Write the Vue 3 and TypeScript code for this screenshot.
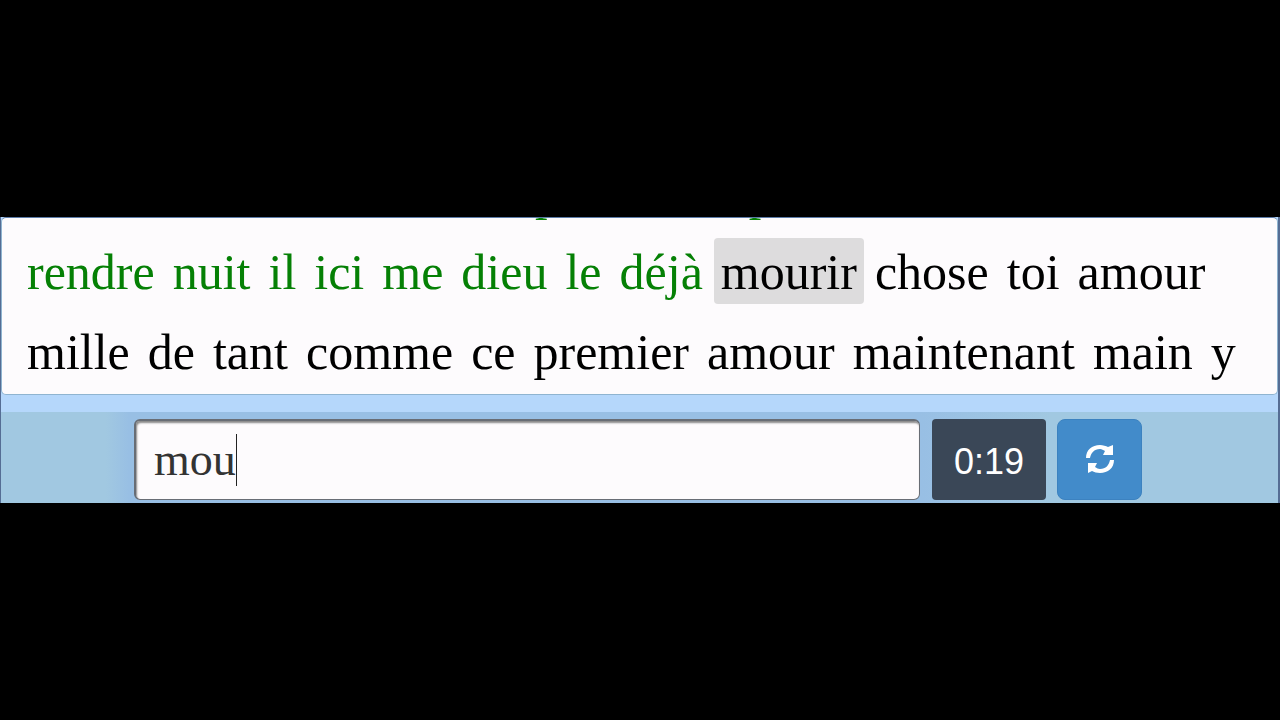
<script setup lang="ts">
import { computed, ref } from 'vue'

type WordState = 'done' | 'current' | 'pending'

const rows: string[][] = [
  ['monde', 'cette', 'homme', 'les', 'pour', 'sans', 'plus', 'dans', 'la', 'nuit'],
  ['rendre', 'nuit', 'il', 'ici', 'me', 'dieu', 'le', 'déjà', 'mourir', 'chose', 'toi', 'amour'],
  ['mille', 'de', 'tant', 'comme', 'ce', 'premier', 'amour', 'maintenant', 'main', 'y'],
]

const activeRow = ref(1)
const activeWord = ref(8)
const typed = ref('mou')
const seconds = ref(19)

const clock = computed(() => {
  const rest = String(seconds.value % 60).padStart(2, '0')
  return `${Math.floor(seconds.value / 60)}:${rest}`
})

function stateOf(row: number, word: number): WordState {
  if (row === activeRow.value && word === activeWord.value) return 'current'
  if (row < activeRow.value || (row === activeRow.value && word < activeWord.value)) return 'done'
  return 'pending'
}

function restart(): void {
  typed.value = ''
  seconds.value = 60
  activeRow.value = 0
  activeWord.value = 0
}
</script>

<template>
  <main class="page">
    <section class="test">
      <div class="words">
        <p v-for="(row, r) in rows" :key="r" class="row">
          <span v-for="(word, w) in row" :key="w" class="word" :class="stateOf(r, w)">{{ word }}</span>
        </p>
      </div>
      <form class="controls" @submit.prevent>
        <label class="field">
          <input v-model="typed" class="entry" type="text" aria-label="Mot" autocomplete="off" spellcheck="false" />
          <span class="mirror" aria-hidden="true"><span class="ghost">{{ typed }}</span><span class="caret"></span></span>
        </label>
        <output class="timer">{{ clock }}</output>
        <button class="reload" type="button" aria-label="Recommencer" @click="restart">
          <svg viewBox="0 0 28 28" aria-hidden="true">
            <path d="M0 13C0 5 6 0 14 0c3 0 6 1 8 2l5-2v10H17l2-4c-2-1-3-2-5-2-6 0-9 4-10 9z" />
            <path d="M28 15c0 8-6 13-14 13-3 0-6-1-8-2l-4 2V18h9l-2 4c2 1 3 2 5 2 6 0 9-4 10-9z" />
          </svg>
        </button>
      </form>
    </section>
  </main>
</template>

<style>
body {
  margin: 0;
  background: #000;
}
</style>

<style scoped>
* {
  box-sizing: border-box;
}

.page {
  min-height: 100vh;
  display: flex;
  flex-direction: column;
  justify-content: center;
  background: #000;
}

.test {
  border: solid #556d94;
  border-width: 0 2px 0 1px;
  background: #b5d7fb;
}

.words {
  height: 178px;
  display: flex;
  flex-direction: column;
  justify-content: flex-end;
  gap: 14px;
  padding: 0 18px 10px;
  overflow: hidden;
  border: 1px solid #8fb4d0;
  border-top-color: #5b7ba8;
  border-radius: 5px;
  background: #fdfbfd;
}

.row {
  flex: none;
  display: flex;
  gap: 4px;
  margin: 0;
  font-family: "Liberation Serif", "Times New Roman", serif;
  font-size: 50px;
  line-height: 64px;
  white-space: nowrap;
}

.word {
  padding: 2px 7px 0;
  border-radius: 4px;
  color: #000;
}

.word.done {
  color: #058005;
}

.word.current {
  background: #dddcdd;
}

.controls {
  display: flex;
  margin-top: 17px;
  padding: 7px 136px 3px 133px;
  background: linear-gradient(90deg, #a1c8e1 105px, #98bfe4 128px, #98bfe4 920px, #a1c8e1 1050px);
}

.field {
  position: relative;
  flex: 1;
  min-width: 0;
  height: 81px;
  font-family: "Liberation Serif", "Times New Roman", serif;
  font-size: 46px;
  line-height: 52px;
}

.entry {
  display: block;
  width: 100%;
  height: 100%;
  padding: 0 18px 2px;
  border: 2px solid #686d75;
  border-bottom-width: 1px;
  border-right-width: 1px;
  border-radius: 6px;
  outline: none;
  background: #fdfbfd;
  box-shadow: inset 1px 2px 2px #888;
  color: #333;
  font: inherit;
}

.mirror {
  position: absolute;
  inset: 15px auto auto 20px;
  display: flex;
  pointer-events: none;
}

.ghost {
  visibility: hidden;
}

.caret {
  width: 1px;
  height: 52px;
  background: #222;
}

.timer {
  display: grid;
  place-items: center;
  width: 114px;
  margin-left: 12px;
  padding-top: 4px;
  border-radius: 4px;
  background: #3a4757;
  color: #fff;
  font-family: "Liberation Sans", Arial, sans-serif;
  font-size: 36px;
  line-height: 42px;
}

.reload {
  display: grid;
  place-items: center;
  width: 85px;
  margin-left: 11px;
  padding: 0 0 2px;
  border: 1px solid #3c82c0;
  border-radius: 8px;
  background: #428bca;
  cursor: pointer;
}

.reload svg {
  width: 28px;
  height: 28px;
  fill: #fff;
}
</style>
